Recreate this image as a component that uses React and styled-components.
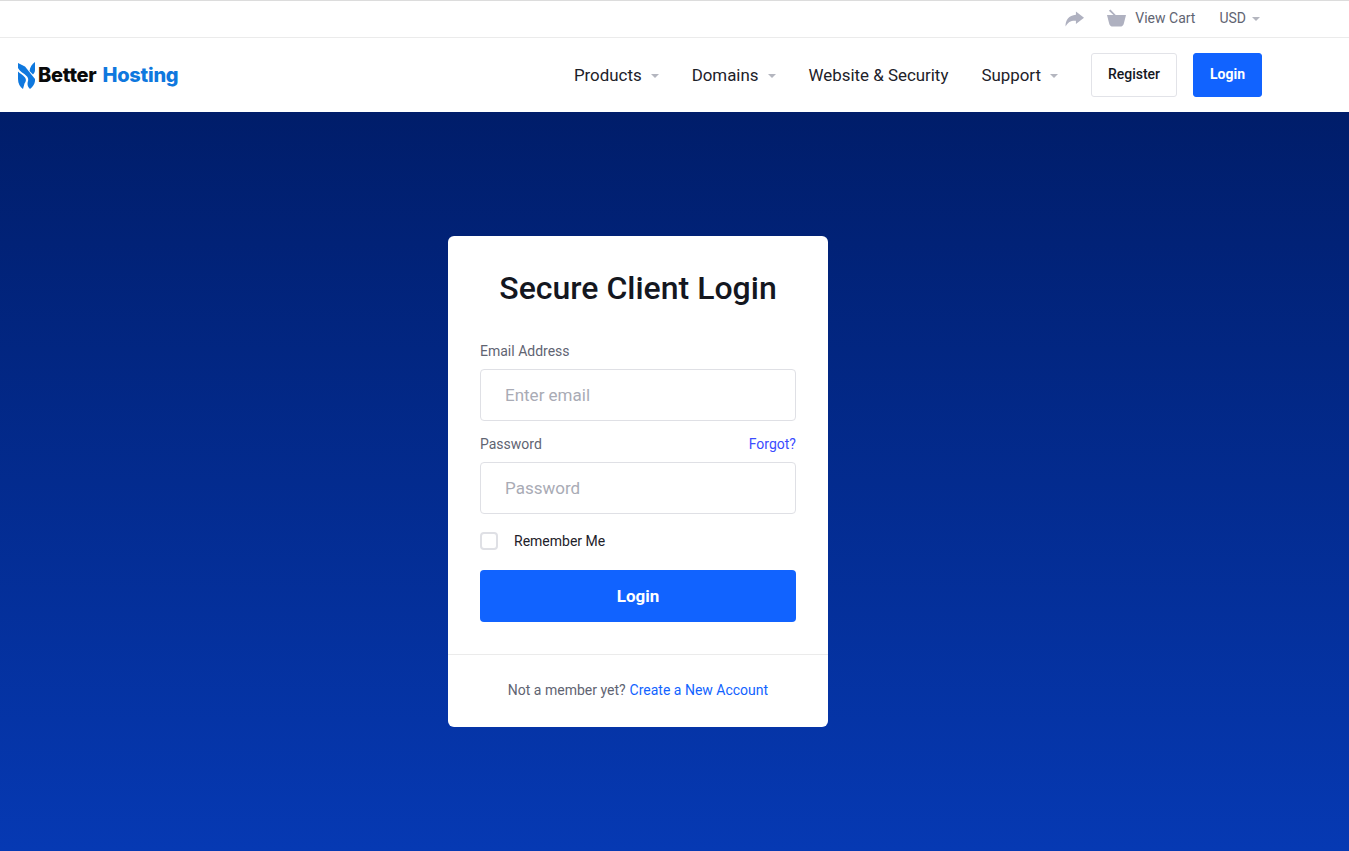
import styled, { createGlobalStyle } from 'styled-components';

const GlobalStyle = createGlobalStyle`
  html, body {
    margin: 0;
    padding: 0;
    background: #fff;
    font-family: Roboto, "Liberation Sans", sans-serif;
  }
  * {
    box-sizing: border-box;
  }
`;

const Page = styled.div`
  display: flex;
  flex-direction: column;
  min-height: 851px;
`;

const TopBar = styled.div`
  display: flex;
  align-items: center;
  justify-content: flex-end;
  height: 38px;
  padding: 0 89px 2px 0;
  border-top: 1px solid #dcdcdc;
  border-bottom: 1px solid #ebebeb;
  color: #5f6472;
  font-size: 14px;
`;

const ShareIcon = styled.svg`
  width: 19px;
  height: 16px;
  margin: 2px 23px 0 0;
  fill: #afb1c0;
`;

const BasketIcon = styled.svg`
  width: 19px;
  height: 18px;
  margin-right: 9px;
  fill: #afb1c0;
`;

const Currency = styled.span`
  display: flex;
  align-items: center;
  gap: 6px;
  margin-left: 24px;
`;

const Caret = styled.i`
  display: block;
  width: 0;
  height: 0;
  margin-top: 1px;
  border-left: 4px solid transparent;
  border-right: 4px solid transparent;
  border-top: 4px solid #b4b6bf;
`;

const Header = styled.header`
  display: flex;
  align-items: center;
  justify-content: space-between;
  height: 74px;
  padding: 0 87px 0 18px;
  background: #fff;
`;

const Logo = styled.div`
  display: flex;
  align-items: center;
  gap: 3px;
  font-family: Inter, sans-serif;
  font-size: 20px;
  font-weight: 800;
  letter-spacing: -0.25px;
  color: #0a0a0a;
`;

const LogoMark = styled.svg`
  width: 17px;
  height: 27px;
`;

const LogoAccent = styled.span`
  color: #0f78de;
  margin-left: 6px;
`;

const Nav = styled.nav`
  display: flex;
  align-items: center;
`;

const NavItem = styled.a`
  display: flex;
  align-items: center;
  gap: 9px;
  margin-right: 33px;
  font-size: 16.9px;
  color: #1d2129;
`;

const HeaderButton = styled.a`
  display: flex;
  align-items: center;
  justify-content: center;
  height: 44px;
  padding-bottom: 2px;
  border-radius: 3px;
  font-size: 14px;
  font-weight: ${p => (p.$primary ? 700 : 500)};
  width: ${p => (p.$primary ? '69px' : '86px')};
  margin-left: ${p => (p.$primary ? '16px' : '0')};
  color: ${p => (p.$primary ? '#fff' : '#14171f')};
  background: ${p => (p.$primary ? '#1163ff' : '#fff')};
  border: 1px solid ${p => (p.$primary ? '#1163ff' : '#e2e3e8')};
`;

const Hero = styled.main`
  flex: 1;
  padding: 124px 0 124px 448px;
  background: linear-gradient(180deg, #001d6a 0%, #0639b3 100%);
`;

const Card = styled.section`
  width: 380px;
  height: 491px;
  background: #fff;
  border-radius: 6px;
`;

const CardBody = styled.form`
  padding: 32px;
  border-bottom: 1px solid #ebebeb;
  height: 419px;
`;

const Title = styled.h1`
  margin: 0 0 33px;
  font-size: 32px;
  line-height: 40px;
  font-weight: 500;
  text-align: center;
  color: #14171f;
`;

const LabelRow = styled.div`
  display: flex;
  justify-content: space-between;
  align-items: center;
  height: 20px;
  margin-bottom: 8px;
  font-size: 14px;
  color: #5f6472;
`;

const Forgot = styled.a`
  color: #3b4cff;
`;

const Field = styled.div`
  display: flex;
  align-items: center;
  height: 52px;
  padding-left: 24px;
  margin-bottom: ${p => p.$mb || '13px'};
  border: 1px solid #dfe0e5;
  border-radius: 4px;
  font-size: 17px;
  color: #a9abb5;
`;

const RememberRow = styled.label`
  display: flex;
  align-items: center;
  gap: 16px;
  height: 18px;
  margin-bottom: 20px;
  font-size: 14px;
  color: #1d2129;
`;

const Checkbox = styled.span`
  display: block;
  width: 18px;
  height: 18px;
  border: 2px solid #dfe0e5;
  border-radius: 4px;
`;

const SubmitButton = styled.div`
  display: flex;
  align-items: center;
  justify-content: center;
  height: 52px;
  border-radius: 4px;
  background: #1163ff;
  color: #fff;
  font-size: 17px;
  font-weight: 700;
`;

const CardFooter = styled.div`
  display: flex;
  align-items: center;
  justify-content: center;
  gap: 4px;
  height: 71px;
  padding-bottom: 2px;
  font-size: 14px;
  color: #5f6472;
`;

const FooterLink = styled.a`
  color: #1163ff;
`;

const App = () => (
  <Page>
    <GlobalStyle />
    <TopBar>
      <ShareIcon viewBox="0 0 20 16">
        <path d="M11.5 0 20 6.6l-8.5 6.6V9.8C6.600 9.400 3 11 .6 16 .2 9.200 4 3.900 11.500 3.400z" />
      </ShareIcon>
      <BasketIcon viewBox="0 0 20 18">
        <path d="M2 1.400 3.600 0l5.600 5.800H20l-2.200 8.600c-.5 2.200-1.900 3.600-4.200 3.600H6.400c-2.300 0-3.700-1.400-4.200-3.600L0 5.800h6.800z" />
      </BasketIcon>
      <span>View Cart</span>
      <Currency>
        USD <Caret />
      </Currency>
    </TopBar>
    <Header>
      <Logo>
        <LogoMark viewBox="0 0 17 27">
          <path fill="#0f78de" d="M0 1l7 3.500L17 17c.4 4-1.500 7.500-5 10-2.500-2-3-5-2-8 .5-2 0-3.500-1.500-5C6 11 2 10 0 6z" />
          <path fill="#0f78de" d="M0 9.500c2 2 5 3.500 7 6 1.500 2 1 4-.5 6L5 27C2 25 0 21.500 0 17z" />
          <path fill="#0f78de" d="M17 0v8c0 2-.8 3-2 4.500L11.500 9C12 5 14 2 17 0z" />
        </LogoMark>
        <span>
          Better<LogoAccent>Hosting</LogoAccent>
        </span>
      </Logo>
      <Nav>
        <NavItem>
          Products <Caret />
        </NavItem>
        <NavItem>
          Domains <Caret />
        </NavItem>
        <NavItem>Website &amp; Security</NavItem>
        <NavItem>
          Support <Caret />
        </NavItem>
        <HeaderButton>Register</HeaderButton>
        <HeaderButton $primary>Login</HeaderButton>
      </Nav>
    </Header>
    <Hero>
      <Card>
        <CardBody>
          <Title>Secure Client Login</Title>
          <LabelRow>Email Address</LabelRow>
          <Field>Enter email</Field>
          <LabelRow>
            Password <Forgot>Forgot?</Forgot>
          </LabelRow>
          <Field $mb="18px">Password</Field>
          <RememberRow>
            <Checkbox />
            Remember Me
          </RememberRow>
          <SubmitButton>Login</SubmitButton>
        </CardBody>
        <CardFooter>
          Not a member yet? <FooterLink>Create a New Account</FooterLink>
        </CardFooter>
      </Card>
    </Hero>
  </Page>
);

export default App;
